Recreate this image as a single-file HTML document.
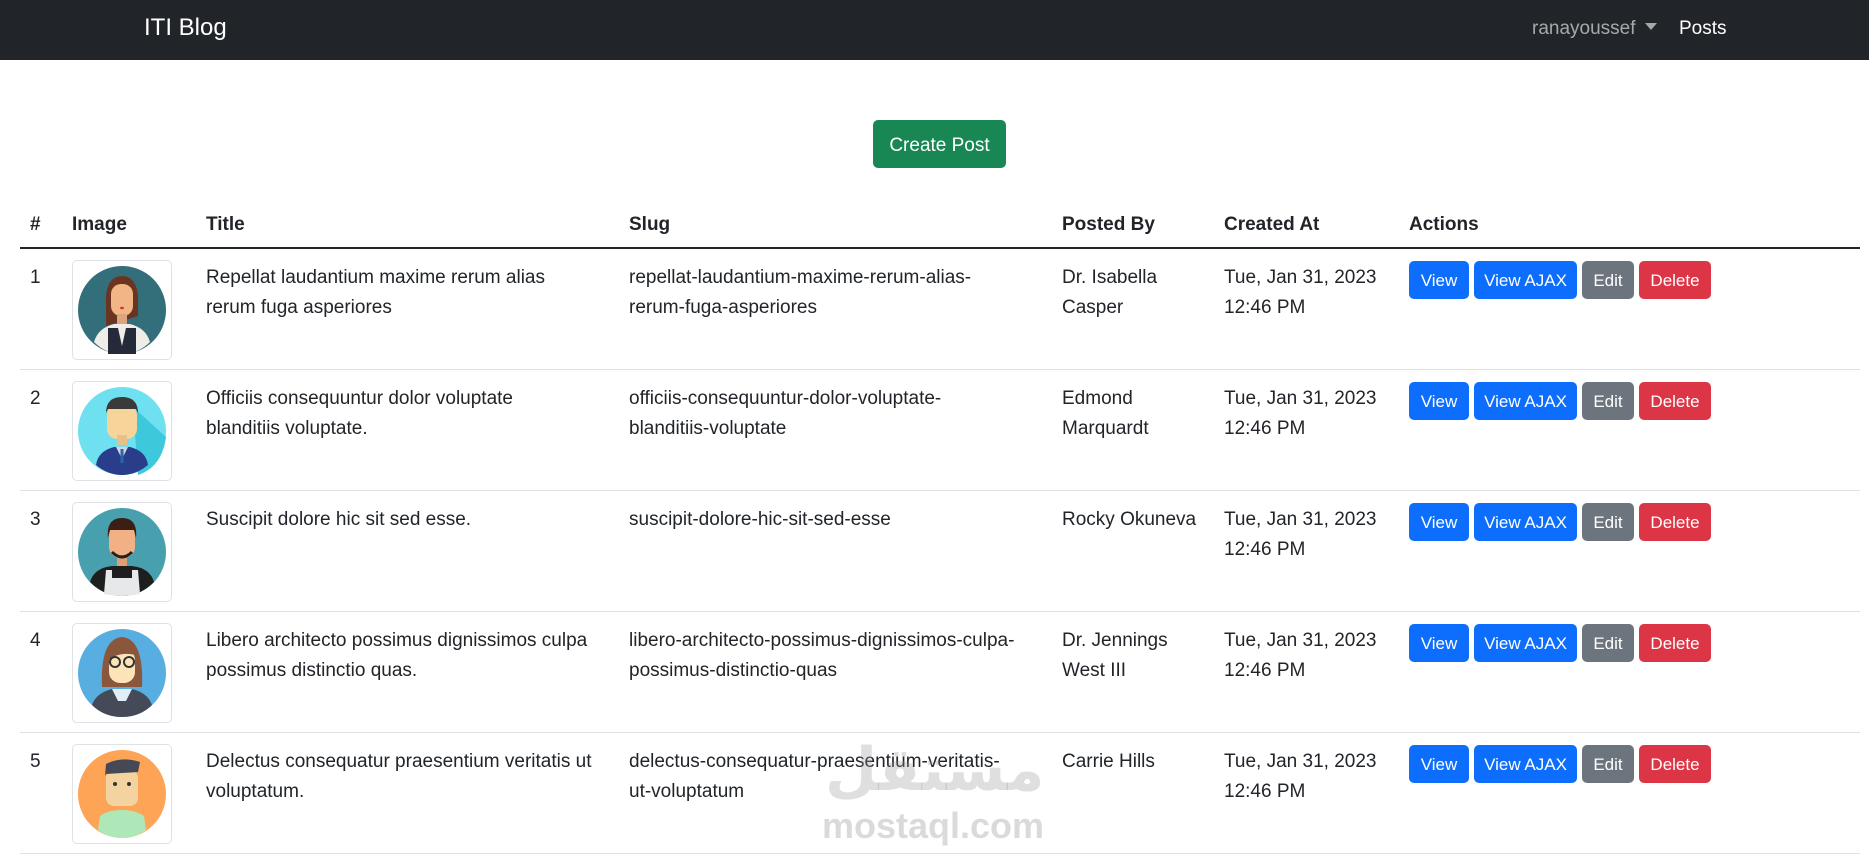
<!DOCTYPE html>
<html><head><meta charset="utf-8"><style>
*{box-sizing:border-box;margin:0;padding:0}
body{width:1869px;height:863px;overflow:hidden;background:#fff;font-family:"Liberation Sans",sans-serif;color:#212529;position:relative}
.nav{position:absolute;left:0;top:0;width:1869px;height:60px;background:#212529}
.brand{position:absolute;left:144px;top:14px;font-size:24px;color:#fff}
.user{position:absolute;left:1532px;top:18px;font-size:19px;color:rgba(255,255,255,.6)}
.caret{display:inline-block;margin-left:9px;vertical-align:4px;border-left:6px solid transparent;border-right:6px solid transparent;border-top:7px solid rgba(255,255,255,.6)}
.posts{position:absolute;left:1679px;top:18px;font-size:19px;color:#fff}
.create{position:absolute;left:873px;top:120px;width:133px;height:48px;background:#198754;border-radius:5px;color:#fff;font-size:19px;text-align:center;line-height:52px}
.th{position:absolute;top:214px;font-size:19px;font-weight:bold}
.hline{position:absolute;left:20px;width:1840px;top:247px;height:2px;background:#212529}
.row{position:absolute;left:20px;width:1840px;height:121px;border-bottom:1px solid #dee2e6}
.c{position:absolute;top:14px;font-size:19px;line-height:30px}
.img{position:absolute;left:52px;top:11px;width:100px;height:100px;border:1px solid #dee2e6;border-radius:5px;background:#fff}
.img svg{position:absolute;left:5px;top:5px}
.btn{position:absolute;top:12px;height:38px;border-radius:5px;color:#fff;font-size:17px;line-height:39px;text-align:center}
.b1{left:1389px;width:60px;background:#0d6efd}
.b2{left:1454px;width:103px;background:#0d6efd}
.b3{left:1562px;width:52px;background:#6c757d}
.b4{left:1619px;width:72px;background:#dc3545}
.wm{position:absolute;left:822px;top:805px;font-size:36px;font-weight:bold;color:rgba(150,150,150,.35)}
.wm2{position:absolute;left:825px;top:735px;font-size:60px;font-weight:bold;color:rgba(150,150,150,.3);font-family:"DejaVu Sans",sans-serif}
</style></head><body>
<div class="nav"><div class="brand">ITI Blog</div><div class="user">ranayoussef<span class="caret"></span></div><div class="posts">Posts</div></div>
<div class="create">Create Post</div>
<div class="th" style="left:30px">#</div>
<div class="th" style="left:72px">Image</div>
<div class="th" style="left:206px">Title</div>
<div class="th" style="left:629px">Slug</div>
<div class="th" style="left:1062px">Posted By</div>
<div class="th" style="left:1224px">Created At</div>
<div class="th" style="left:1409px">Actions</div>
<div class="hline"></div>

<div class="row" style="top:249px">
<div class="c" style="left:10px">1</div>
<div class="img"><svg width="88" height="88" viewBox="0 0 88 88"><ellipse cx="44" cy="44" rx="44" ry="44" fill="#336e7b"/><path d="M28 30 Q30 10 44 10 Q58 10 60 30 L60 50 L28 60Z" fill="#6b3420"/><rect x="33" y="18" width="22" height="32" rx="10" fill="#f2b586"/><rect x="39" y="48" width="10" height="12" fill="#dca57e"/><path d="M16 76 Q20 62 36 58 L52 58 Q68 62 72 76 Q60 88 44 88 Q28 88 16 76Z" fill="#f0ece8"/><path d="M30 62 L40 62 L44 80 L48 62 L58 62 L58 88 L30 88Z" fill="#252a3a"/><ellipse cx="44" cy="42" rx="2" ry="1.2" fill="#d33"/></svg></div>
<div class="c" style="left:186px">Repellat laudantium maxime rerum alias<br>rerum fuga asperiores</div>
<div class="c" style="left:609px">repellat-laudantium-maxime-rerum-alias-<br>rerum-fuga-asperiores</div>
<div class="c" style="left:1042px">Dr. Isabella<br>Casper</div>
<div class="c" style="left:1204px">Tue, Jan 31, 2023<br>12:46 PM</div>
<div class="btn b1">View</div><div class="btn b2">View AJAX</div><div class="btn b3">Edit</div><div class="btn b4">Delete</div>
</div>

<div class="row" style="top:370px">
<div class="c" style="left:10px">2</div>
<div class="img"><svg width="88" height="88" viewBox="0 0 88 88"><circle cx="44" cy="44" r="44" fill="#6ee0ef"/><path d="M55 20 L88 50 Q84 80 60 88Z" fill="#3ec8dc"/><rect x="29" y="18" width="30" height="34" rx="10" fill="#f6d49a"/><path d="M28 26 Q28 10 44 10 Q60 10 60 26 L58 22 L30 22Z" fill="#3a3a3a"/><rect x="39" y="48" width="10" height="10" fill="#e8c088"/><path d="M18 78 Q20 64 36 60 L52 60 Q68 64 70 78 Q58 88 44 88 Q30 88 18 78Z" fill="#2a3d8a"/><path d="M38 60 L50 60 L44 72Z" fill="#c9d8e6"/><rect x="42.5" y="62" width="3" height="14" fill="#2b64a8"/></svg></div>
<div class="c" style="left:186px">Officiis consequuntur dolor voluptate<br>blanditiis voluptate.</div>
<div class="c" style="left:609px">officiis-consequuntur-dolor-voluptate-<br>blanditiis-voluptate</div>
<div class="c" style="left:1042px">Edmond<br>Marquardt</div>
<div class="c" style="left:1204px">Tue, Jan 31, 2023<br>12:46 PM</div>
<div class="btn b1">View</div><div class="btn b2">View AJAX</div><div class="btn b3">Edit</div><div class="btn b4">Delete</div>
</div>

<div class="row" style="top:491px">
<div class="c" style="left:10px">3</div>
<div class="img"><svg width="88" height="88" viewBox="0 0 88 88"><circle cx="44" cy="44" r="44" fill="#48a0ae"/><rect x="31" y="16" width="26" height="34" rx="11" fill="#f2b185"/><path d="M30 30 Q28 10 44 10 Q60 10 58 30 L56 22 L32 22Z" fill="#3a1f14"/><rect x="39" y="48" width="10" height="10" fill="#e0a072"/><path d="M34 44 Q44 54 54 44" stroke="#222" stroke-width="3" fill="none"/><path d="M12 74 Q16 60 34 58 L54 58 Q72 60 76 74 Q62 88 44 88 Q26 88 12 74Z" fill="#1e1e1e"/><path d="M28 62 L34 62 L34 70 L54 70 L54 62 L60 62 L62 86 Q44 90 26 86Z" fill="#e6e8ea"/></svg></div>
<div class="c" style="left:186px">Suscipit dolore hic sit sed esse.</div>
<div class="c" style="left:609px">suscipit-dolore-hic-sit-sed-esse</div>
<div class="c" style="left:1042px">Rocky Okuneva</div>
<div class="c" style="left:1204px">Tue, Jan 31, 2023<br>12:46 PM</div>
<div class="btn b1">View</div><div class="btn b2">View AJAX</div><div class="btn b3">Edit</div><div class="btn b4">Delete</div>
</div>

<div class="row" style="top:612px">
<div class="c" style="left:10px">4</div>
<div class="img"><svg width="88" height="88" viewBox="0 0 88 88"><circle cx="44" cy="44" r="44" fill="#58aee0"/><path d="M24 58 Q22 10 44 8 Q66 10 64 58Z" fill="#8a563c"/><rect x="31" y="20" width="26" height="34" rx="11" fill="#fde4b8"/><path d="M30 28 Q36 14 58 22 L58 26 Q40 22 30 32Z" fill="#8a563c"/><circle cx="37" cy="33" r="5" fill="none" stroke="#333" stroke-width="2"/><circle cx="51" cy="33" r="5" fill="none" stroke="#333" stroke-width="2"/><path d="M14 76 Q18 64 34 60 L54 60 Q70 64 74 76 Q62 88 44 88 Q26 88 14 76Z" fill="#444a57"/><path d="M34 60 L54 60 L48 72 L40 72Z" fill="#e2eef5"/></svg></div>
<div class="c" style="left:186px">Libero architecto possimus dignissimos culpa<br>possimus distinctio quas.</div>
<div class="c" style="left:609px">libero-architecto-possimus-dignissimos-culpa-<br>possimus-distinctio-quas</div>
<div class="c" style="left:1042px">Dr. Jennings<br>West III</div>
<div class="c" style="left:1204px">Tue, Jan 31, 2023<br>12:46 PM</div>
<div class="btn b1">View</div><div class="btn b2">View AJAX</div><div class="btn b3">Edit</div><div class="btn b4">Delete</div>
</div>

<div class="row" style="top:733px">
<div class="c" style="left:10px">5</div>
<div class="img"><svg width="88" height="88" viewBox="0 0 88 88"><circle cx="44" cy="44" r="44" fill="#fda457"/><rect x="28" y="20" width="32" height="36" rx="8" fill="#f3d3a0"/><path d="M27 26 L28 14 Q44 6 62 12 L60 22 L28 24Z" fill="#444955"/><circle cx="37" cy="34" r="2" fill="#333"/><circle cx="51" cy="34" r="2" fill="#333"/><path d="M20 80 L22 66 Q30 60 44 60 Q58 60 66 66 L68 80 Q58 88 44 88 Q30 88 20 80Z" fill="#aee8b8"/></svg></div>
<div class="c" style="left:186px">Delectus consequatur praesentium veritatis ut<br>voluptatum.</div>
<div class="c" style="left:609px">delectus-consequatur-praesentium-veritatis-<br>ut-voluptatum</div>
<div class="c" style="left:1042px">Carrie Hills</div>
<div class="c" style="left:1204px">Tue, Jan 31, 2023<br>12:46 PM</div>
<div class="btn b1">View</div><div class="btn b2">View AJAX</div><div class="btn b3">Edit</div><div class="btn b4">Delete</div>
</div>
<div class="wm2">مستقل</div>
<div class="wm">mostaql.com</div>
</body></html>
